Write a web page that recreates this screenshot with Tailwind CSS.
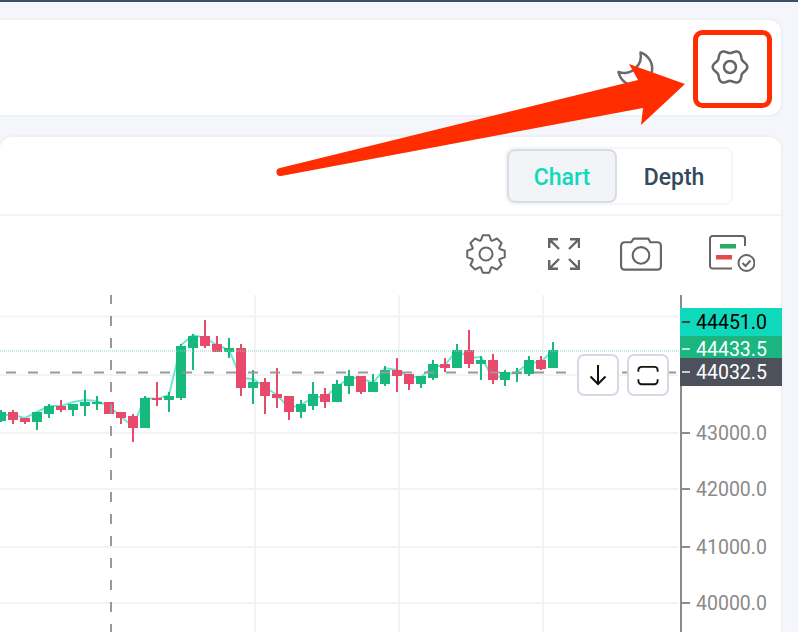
<!DOCTYPE html>
<html lang="en">
<head>
    <meta charset="UTF-8">
    <title>Chart settings</title>
    <script src="https://cdn.jsdelivr.net/npm/@tailwindcss/browser@4"></script>
</head>
<body class="bg-[#f4f6fb] overflow-hidden h-[632px] relative font-['Roboto',sans-serif]">
    <div class="h-[2px] bg-[#3d4f63]"></div>

    <!-- Top toolbar -->
    <div class="mt-[16px] ml-[-20px] mr-[15px] h-[99px] bg-white border-2 border-[#eef0f4] rounded-[14px]"></div>

    <!-- Chart card -->
    <div class="mt-[18px] ml-[-2px] mr-[15px] h-[520px] bg-white border-2 border-[#f0f1f5] rounded-t-[14px]">
        <div class="h-[79px] flex justify-end items-center pr-[48px] border-b-2 border-[#f2f3f6]">
            <div class="flex h-[58px] w-[228px] border-2 border-[#f5f6f8] rounded-[8px]">
                <div class="w-[110px] pt-[5px] flex items-center justify-center bg-[#f2f4f7] border-2 border-[#d8dce4] rounded-[8px] font-medium text-[23px] text-[#10d9bb]">Chart</div>
                <div class="flex-1 pt-[5px] flex items-center justify-center font-medium text-[23px] text-[#34495e]">Depth</div>
            </div>
        </div>

        <!-- Chart tools -->
        <div class="h-[79px] flex justify-end items-center pr-[26px] pb-[3px]">
            <svg class="w-[40px] h-[40px]" viewBox="0 0 40 40" fill="none" stroke="#666" stroke-width="2" stroke-linejoin="round">
                <path id="cog" d=""></path>
                <circle cx="20" cy="20" r="6.5"></circle>
            </svg>
            <svg class="w-[32px] h-[34px] ml-[42px]" viewBox="0 0 32 34" fill="none" stroke="#666" stroke-width="2.4">
                <path d="M1.2 11V2.2H10M1.2 2.2L11 12M31 11V2.2H22M31 2.2L21 12M1.2 23V31.8H10M1.2 31.8L11 22M31 23V31.8H22M31 31.8L21 22"></path>
            </svg>
            <svg class="w-[42px] h-[34px] ml-[40px]" viewBox="0 0 43 34" fill="none" stroke="#666" stroke-width="2.2" stroke-linejoin="round">
                <path d="M5 5H11.5L14 1.2H29L31 5H38.5A3.4 3.4 0 0 1 41.9 8.4V29.6A3.4 3.4 0 0 1 38.5 33H4.5A3.4 3.4 0 0 1 1.1 29.6V8.4A3.9 3.9 0 0 1 5 5Z"></path>
                <circle cx="21.5" cy="18.5" r="8.5"></circle>
            </svg>
            <svg class="w-[46px] h-[38px] ml-[47px]" viewBox="0 0 46 38" fill="none" stroke="#666" stroke-width="2">
                <path d="M36 11V3.5A2.5 2.5 0 0 0 33.5 1H3.5A2.5 2.5 0 0 0 1 3.5V31A2.5 2.5 0 0 0 3.500 33.500H23"></path>
                <rect x="11" y="9" width="16" height="4.500" fill="#27ae60" stroke="none"></rect>
                <rect x="7" y="20" width="16" height="4.500" fill="#e34c4c" stroke="none"></rect>
                <circle cx="37.500" cy="28" r="8"></circle>
                <path d="M33.500 28L36.500 31L41.500 25.500"></path>
            </svg>
        </div>

        <!-- Chart area -->
        <div class="relative flex h-[337px]">
            <svg id="plot" class="w-[680px] h-[337px] shrink-0" viewBox="0 295 680 337"></svg>

            <div class="absolute left-[577px] top-[59px] flex gap-[8px]">
                <div class="w-[42px] h-[42px] flex items-center justify-center bg-white border-2 border-[#d5d9e3] rounded-[7px]">
                    <svg class="w-[20px] h-[24px]" viewBox="0 0 20 24" fill="none" stroke="#111" stroke-width="2"><path d="M10 2V21M2.500 13.500L10 21L17.500 13.500"></path></svg>
                </div>
                <div class="w-[42px] h-[42px] flex items-center justify-center bg-white border-2 border-[#d5d9e3] rounded-[7px]">
                    <svg class="w-[22px] h-[21px]" viewBox="0 0 24 22" fill="none" stroke="#111" stroke-width="2"><path d="M1.500 7V5A3.500 3.500 0 0 1 5 1.500H19A3.500 3.500 0 0 1 22.500 5V7M1.500 15V17A3.500 3.500 0 0 0 5 20.500H19A3.500 3.500 0 0 0 22.500 17V15"></path></svg>
                </div>
            </div>

            <!-- Price axis -->
            <div class="relative flex-1 border-l-2 border-[#8c8c8c] text-[19.5px]">
                <div class="absolute left-[-2px] right-[-1px] top-[41px] h-[26px] pl-[2px] flex items-center bg-[#1bb57f] text-white"><i class="w-[8px] h-[2px] bg-white/70"></i><span class="ml-[6px] mt-[2px]">44433.5</span></div>
                <div class="absolute left-[-2px] right-[-1px] top-[13px] h-[28px] pl-[2px] flex items-center bg-[#0fd9bc] text-black"><i class="w-[8px] h-[2px] bg-[#444]"></i><span class="ml-[6px] mt-[2px]">44451.0</span></div>
                <div class="absolute left-[-2px] right-[-1px] top-[63px] h-[28px] pl-[2px] flex items-center bg-[#4d515c] text-white"><i class="w-[8px] h-[2px] bg-white/70"></i><span class="ml-[6px] mt-[2px]">44032.5</span></div>
                <div class="absolute left-0 top-[126px] h-[24px] flex items-center text-[#8a8a8a]"><i class="w-[8px] h-[2px] bg-[#8c8c8c]"></i><span class="ml-[6px] mt-[2px]">43000.0</span></div>
                <div class="absolute left-0 top-[182px] h-[24px] flex items-center text-[#8a8a8a]"><i class="w-[8px] h-[2px] bg-[#8c8c8c]"></i><span class="ml-[6px] mt-[2px]">42000.0</span></div>
                <div class="absolute left-0 top-[240px] h-[24px] flex items-center text-[#8a8a8a]"><i class="w-[8px] h-[2px] bg-[#8c8c8c]"></i><span class="ml-[6px] mt-[2px]">41000.0</span></div>
                <div class="absolute left-0 top-[296px] h-[24px] flex items-center text-[#8a8a8a]"><i class="w-[8px] h-[2px] bg-[#8c8c8c]"></i><span class="ml-[6px] mt-[2px]">40000.0</span></div>
            </div>
        </div>
    </div>

    <!-- Screenshot annotation: moon icon, red frame and arrow lie over the page -->
    <svg class="absolute left-0 top-0 w-[798px] h-[632px] pointer-events-none" viewBox="0 0 798 632" fill="none">
        <path d="M640.500 52.500A17 17 0 1 1 618.500 72A17 17 0 0 0 640.500 52.500Z" stroke="#6b6b6b" stroke-width="2.500" stroke-linejoin="round"></path>
        <path id="flower" stroke="#666" stroke-width="2.500"></path>
        <circle cx="730" cy="67" r="6" stroke="#666" stroke-width="2.500"></circle>
        <rect x="695.500" y="32.500" width="74" height="73" rx="7" stroke="#ff2d00" stroke-width="5"></rect>
        <path d="M280 168L638 80L629 64L685 84L641 125L643 108L281 176A4 4 0 0 1 280 168Z" fill="#ff2d00"></path>
    </svg>

    <script>
        // [center x, wick top, wick bottom, body top, body bottom, up?]
        const candles = [
            [1,410,422,412,421,1],[13,410,424,412,420,0],[25,418,424,418,422,0],[37,412,430,412,422,1],
            [49,404,418,406,414,1],[61,400,412,406,410,0],[73,404,416,404,410,1],[85,390,416,402,406,1],
            [97,396,410,402,404,1],[109,402,414,402,414,0],[121,412,424,412,418,0],[133,414,442,416,428,0],
            [145,396,428,398,428,1],[157,382,406,398,400,0],[169,392,412,396,400,1],[181,344,400,346,398,1],
            [193,334,370,336,348,1],[205,320,348,336,346,0],[217,336,352,344,352,0],[229,338,358,348,352,1],
            [241,344,396,348,388,0],[253,370,404,382,388,1],[265,378,414,382,396,0],[277,368,408,394,398,0],
            [289,396,420,396,412,0],[301,400,418,404,412,1],[313,382,410,394,406,1],[325,388,408,394,402,0],
            [337,380,402,384,402,1],[349,370,394,376,386,1],[361,376,394,376,392,0],[373,374,392,382,392,1],
            [385,366,386,370,384,1],[397,358,392,370,376,0],[409,374,390,374,384,0],[421,376,388,376,384,1],
            [433,360,380,364,378,1],[445,358,372,364,368,0],[457,344,368,350,368,1],[469,330,368,350,364,0],
            [481,356,380,360,364,1],[493,354,384,360,380,0],[505,370,386,372,380,1],[517,368,382,372,373,1],
            [529,356,376,360,374,1],[541,356,370,360,369,0],[553,342,368,350,368,1]
        ];
        const maLine = '0,415 13,415 25,418 37,412 49,406 61,406 73,402 85,400 97,401 109,406 121,417 133,426 145,398 157,399 169,395 181,345 193,335 205,338 217,345 229,350 241,378 253,379 265,387 277,395 289,408 301,405 313,397 325,397 337,387 349,378 361,378 373,383 385,368 397,370 409,377 421,377 433,367 445,365 457,350 469,358 481,357 493,378 505,375 517,372 529,363 541,362 553,350';

        const plot = document.getElementById('plot');
        const add = (tag, attrs) => {
            const el = document.createElementNS('http://www.w3.org/2000/svg', tag);
            for (const k in attrs) el.setAttribute(k, attrs[k]);
            plot.appendChild(el);
        };

        // grid
        [316.5, 375, 433, 489, 547, 603].forEach(y => add('line', {x1: 0, x2: 678, y1: y, y2: y, stroke: '#f3f3f5', 'stroke-width': 2}));
        [255, 399, 543].forEach(x => add('line', {x1: x, x2: x, y1: 295, y2: 632, stroke: '#f3f3f5', 'stroke-width': 2}));

        add('polyline', {points: maLine, fill: 'none', stroke: '#6fe6d5', 'stroke-width': 2});

        candles.forEach(([x, wt, wb, bt, bb, up]) => {
            const color = up ? '#17b97c' : '#e84a6b';
            add('rect', {x: x - 1, y: wt, width: 2, height: wb - wt, fill: color});
            add('rect', {x: x - 5, y: bt, width: 10, height: Math.max(bb - bt, 2), fill: color});
        });

        add('line', {x1: 0, x2: 680, y1: 351, y2: 351, stroke: '#7fdcc0', 'stroke-width': 1, 'stroke-dasharray': '1 1'});
        add('line', {x1: 6, x2: 680, y1: 372.5, y2: 372.5, stroke: '#999', 'stroke-width': 2, 'stroke-dasharray': '10 12'});
        add('line', {x1: 111, x2: 111, y1: 294, y2: 632, stroke: '#999', 'stroke-width': 2, 'stroke-dasharray': '10 12'});

        // settings cog outline, eight teeth
        const pts = [];
        for (let i = 0; i < 8; i++) {
            const a = i * Math.PI / 4 - Math.PI / 2;
            [[14.5, -0.36], [19, -0.17], [19, 0.17], [14.5, 0.36]].forEach(([r, d]) => {
                pts.push((20 + r * Math.cos(a + d)).toFixed(2) + ' ' + (20 + r * Math.sin(a + d)).toFixed(2));
            });
        }
        document.getElementById('cog').setAttribute('d', 'M' + pts.join('L') + 'Z');

        // six lobed settings icon in the toolbar
        const lobes = [];
        for (let i = 0; i < 72; i++) {
            const t = i * Math.PI / 36;
            const r = 15.6 + 1.7 * Math.cos(6 * t);
            lobes.push((730 + r * Math.cos(t)).toFixed(2) + ' ' + (67 + r * Math.sin(t)).toFixed(2));
        }
        document.getElementById('flower').setAttribute('d', 'M' + lobes.join('L') + 'Z');
    </script>
</body>
</html>
